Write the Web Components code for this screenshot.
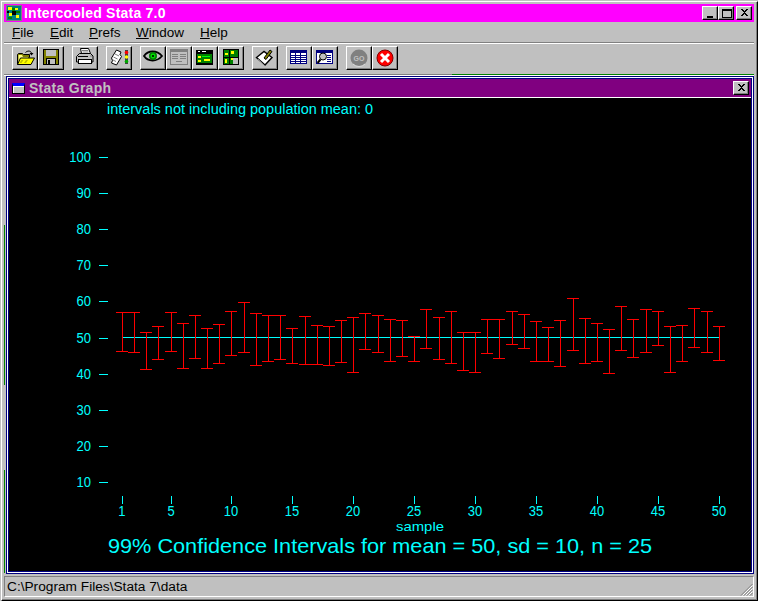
<!DOCTYPE html>
<html>
<head>
<meta charset="utf-8">
<title>Intercooled Stata 7.0</title>
<style>
  html, body { margin: 0; padding: 0; background: #c0c0c0; }
</style>
</head>
<body>
<stata-app>
  <title-bar slot="title">Intercooled Stata 7.0</title-bar>
  <menu-bar slot="menu"></menu-bar>
  <tool-bar slot="tools"></tool-bar>
  <graph-window slot="main" heading="Stata Graph"><stata-plot></stata-plot></graph-window>
  <status-bar slot="status">C:\Program Files\Stata 7\data</status-bar>
</stata-app>

<script>
const FONT = `"Liberation Sans", Arial, sans-serif`;

const CAPTION_BTN = `
  :host { display: block; }
  .cap {
    width: 16px; height: 14px; box-sizing: border-box; background: #c0c0c0;
    border: 1px solid; border-color: #fff #000 #000 #fff;
    box-shadow: inset -1px -1px 0 #808080;
    display: flex; align-items: center; justify-content: center;
  }
  svg { display: block; }
`;

class CaptionButton extends HTMLElement {
  constructor() {
    super();
    this.attachShadow({ mode: 'open' });
    const glyphs = {
      min: '<rect x="2" y="8" width="6" height="2" fill="#000"/>',
      max: '<path d="M1 1h9v8h-9z M1 2h9" fill="none" stroke="#000"/>',
      close: '<path d="M2 1h2v1h1v1h1v-1h1v-1h2v1h-1v1h-1v1h-1v1h1v1h1v1h1v1h-2v-1h-1v-1h-1v1h-1v1h-2v-1h1v-1h1v-1h1v-1h-1v-1h-1v-1h-1z" fill="#000"/>'
    };
    this.shadowRoot.innerHTML = `
      <style>${CAPTION_BTN}</style>
      <div class="cap"><svg width="11" height="10" viewBox="0 0 11 10" shape-rendering="crispEdges">${glyphs[this.getAttribute('kind')]}</svg></div>
    `;
  }
}
customElements.define('caption-button', CaptionButton);

class TitleBar extends HTMLElement {
  constructor() {
    super();
    this.attachShadow({ mode: 'open' });
    this.shadowRoot.innerHTML = `
      <style>
        :host { display: flex; align-items: center; height: 18px; background: #ff00ff; padding: 0 2px; color: #fff; font: bold 14px ${FONT}; }
        .icon { margin-right: 2px; display: block; }
        .text { flex: 1; letter-spacing: .23px; white-space: nowrap; }
        .btns { display: flex; }
        .btns caption-button:last-child { margin-left: 2px; }
      </style>
      <svg class="icon" width="16" height="16" viewBox="0 0 16 16" shape-rendering="crispEdges">
        <rect width="16" height="16" fill="#808080"/>
        <rect x="1" y="1" width="14" height="14" fill="#008080"/>
        <path d="M2 2h4v3h-4z M9 3h3v2h-3z M3 8h3v3h-3z M10 10h3v3h-3z" fill="#ffff00"/>
        <path d="M6 3h3v3h-3z M2 12h4v2h-4z M10 6h4v2h-4z" fill="#008000"/>
        <path d="M6 6h4v4h-4z M1 6h2v2h-2z" fill="#000"/>
      </svg>
      <span class="text"><slot></slot></span>
      <div class="btns">
        <caption-button kind="min"></caption-button>
        <caption-button kind="max"></caption-button>
        <caption-button kind="close"></caption-button>
      </div>
    `;
  }
}
customElements.define('title-bar', TitleBar);

class MenuBar extends HTMLElement {
  constructor() {
    super();
    this.attachShadow({ mode: 'open' });
    const items = [['F', 'ile', 38], ['E', 'dit', 39], ['P', 'refs', 47], ['W', 'indow', 64], ['H', 'elp', 40]];
    this.shadowRoot.innerHTML = `
      <style>
        :host { display: flex; height: 20px; align-items: center; padding-left: 8px; font: 13.5px ${FONT}; color: #000; border-bottom: 1px solid #808080; box-shadow: 0 1px 0 #fff; }
        span { display: block; white-space: nowrap; }
        u { text-underline-offset: 1px; }
      </style>
      ${items.map(i => `<span style="width:${i[2]}px"><u>${i[0]}</u>${i[1]}</span>`).join('')}
    `;
  }
}
customElements.define('menu-bar', MenuBar);

class ToolButton extends HTMLElement {
  constructor() {
    super();
    this.attachShadow({ mode: 'open' });
    this.shadowRoot.innerHTML = `
      <style>
        :host {
          display: flex; align-items: center; justify-content: center;
          width: 26px; height: 24px; box-sizing: border-box; background: #c0c0c0;
          border: 1px solid; border-color: #fff #000 #000 #fff;
          box-shadow: inset -1px -1px 0 #808080;
        }
        ::slotted(svg) { display: block; }
      </style>
      <slot></slot>
    `;
  }
}
customElements.define('tool-button', ToolButton);

// all on a 22x22 grid
const ICONS = [
  // open
  `<path d="M3.500 17.500v-10l1-1h4l1 1h6v3" fill="#808000" stroke="#000"/><path d="M4.500 16v-8h3.500l1 2h5v1h-7z" fill="#ffff80"/><path d="M3.500 17.500l3-6.500h14l-3.500 6.500z" fill="#ffff00" stroke="#000"/><path d="M5.500 16l2-3h2l-2 3zM10 16l2-3h2l-2 3z" fill="#c0c000"/><path d="M11.500 5.500c2-2 5-2 6 .5" fill="none" stroke="#000"/><path d="M15.500 6h4l-2 2.500z" fill="#000"/>`,
  // save
  `<rect x="3.500" y="2.500" width="15" height="15" fill="#808000" stroke="#000"/><rect x="6" y="3" width="10" height="6" fill="#c0c0c0"/><rect x="6.500" y="11.500" width="9" height="6" fill="#c0c0c0" stroke="#000"/><rect x="8" y="13" width="2" height="4" fill="#000"/>`,
  // print
  `<path d="M6.500 1.500h8l2 5h-9z" fill="#fff" stroke="#000"/><path d="M8 3.500h6M8.500 5h6" stroke="#808080"/><path d="M2.500 9.500l3-3h11l2.500 2.500v6h-16.500z" fill="#c0c0c0" stroke="#000"/><rect x="4.500" y="12.500" width="13" height="4" fill="#fff" stroke="#000"/><path d="M4 9.500h10" stroke="#000"/><path d="M16 9h2" stroke="#808080"/>`,
  // log and lights
  `<path d="M3.500 11l5-8 4.500 2-1 2.500 1.500 2-5 8.500-5-2 1-2.500z" fill="#fff" stroke="#000"/><path d="M7 7l4 2M5.500 10l4 2M5 13l3 1.500" stroke="#808080"/><rect x="16" y="3" width="5" height="16" fill="#c0c0c0"/><rect x="17" y="3" width="3" height="14" fill="#404040"/><circle cx="18.500" cy="5.500" r="1.800" fill="#f00"/><circle cx="18.500" cy="10" r="1.800" fill="#ff0"/><circle cx="18.500" cy="14.500" r="1.800" fill="#0a0"/>`,
  // eye
  `<path d="M2 9c4-6 13-6 18 0-5 6-14 6-18 0z" fill="#c0c0c0" stroke="#000" stroke-width="1.800"/><circle cx="11" cy="9" r="4" fill="#008000"/><circle cx="11" cy="9" r="2.400" fill="#00e000"/><circle cx="11" cy="9" r="1.100" fill="#000"/>`,
  // results, greyed
  `<rect x="2" y="2" width="18" height="16" fill="#808080"/><rect x="3" y="5" width="16" height="12" fill="#c0c0c0"/><path d="M4 7.500h6M12 7.500h6M4 9.500h6M12 9.500h6M4 11.500h6M12 11.500h6M8 14.500h6" stroke="#808080"/>`,
  // board, black frame
  `<rect x="2" y="3" width="17" height="15" fill="#000"/><rect x="3" y="7" width="15" height="9" fill="#008000"/><path d="M4 4.500h2M8 4.500h4" stroke="#fff"/><path d="M4 9h3v2h-3z M10 12h6v2h-6z M4 13h3v2h-3z" fill="#ffff00"/><path d="M8 9h8v1h-8z" fill="#00ff00"/>`,
  // board, grid
  `<rect x="3" y="2" width="16" height="16" fill="#000"/><rect x="4" y="3" width="14" height="14" fill="#008000"/><rect x="13" y="11" width="5" height="6" fill="#c0c0c0"/><path d="M9.500 3v14M4 10.500h14" stroke="#000"/><path d="M5 6h3v2h-3z M11 4h3v3h-3z M5 12h2v4h-2z M11 11h2v2h-2z" fill="#ffff00"/>`,
  // tag and pen
  `<path d="M2.500 10.500l7.500-6 8 6-7 7.500z" fill="#fff" stroke="#000" stroke-width="1.400"/><path d="M10 11l6-8 2 1.500-6 8z" fill="#808000" stroke="#000"/><path d="M4 12l7 7" stroke="#808080"/>`,
  // table
  `<rect x="2" y="3" width="17" height="14" fill="#000080"/><rect x="3" y="6" width="15" height="10" fill="#fff"/><path d="M3 8.500h15M3 10.500h15M3 12.500h15M3 14.500h15M7.500 6v10M12.500 6v10" stroke="#000080"/>`,
  // table and magnifier
  `<rect x="2" y="3" width="17" height="14" fill="#000080"/><rect x="3" y="6" width="15" height="10" fill="#fff"/><path d="M13 8.500h4M13 10.500h4M13 12.500h4M13 14.500h4" stroke="#000080"/><circle cx="9" cy="9.500" r="3.500" fill="#c0c0c0" stroke="#000"/><path d="M6.500 12.500l-3 3.500" stroke="#000" stroke-width="2"/>`,
  // go, greyed
  `<circle cx="11" cy="11" r="8.500" fill="#808080"/><path d="M5 17a8.500 8.500 0 0 0 12 0" stroke="#dfdfdf" fill="none"/><text x="11" y="13.500" text-anchor="middle" font-family="Liberation Sans" font-size="7" font-weight="bold" fill="#c0c0c0">GO</text>`,
  // stop
  `<circle cx="11" cy="11" r="8" fill="#f00" stroke="#800000"/><path d="M7 7l8 8M15 7l-8 8" stroke="#fff" stroke-width="3"/>`
];

class ToolBar extends HTMLElement {
  constructor() {
    super();
    this.attachShadow({ mode: 'open' });
    const groups = [[0, 1], [2], [3], [4, 5, 6, 7], [8], [9, 10], [11, 12]];
    const btn = i => `<tool-button><svg width="22" height="22" viewBox="0 0 22 22">${ICONS[i]}</svg></tool-button>`;
    this.shadowRoot.innerHTML = `
      <style>
        :host { display: flex; gap: 8px; height: 30px; padding: 2px 0 0 8px; box-sizing: border-box; margin-top: 1px; }
        .group { display: flex; }
      </style>
      ${groups.map(g => `<div class="group">${g.map(btn).join('')}</div>`).join('')}
    `;
  }
}
customElements.define('tool-bar', ToolBar);

class GraphWindow extends HTMLElement {
  constructor() {
    super();
    this.attachShadow({ mode: 'open' });
    this.shadowRoot.innerHTML = `
      <style>
        :host {
          display: flex; flex-direction: column; box-sizing: border-box;
          width: 748px; height: 498px; background: #fff;
          border: 1px solid #000080; padding: 1px;
        }
        .inner { flex: 1; display: flex; flex-direction: column; border: 1px solid #000080; min-height: 0; }
        .head {
          height: 18px; background: #800080; display: flex; align-items: center;
          padding: 0 2px 0 3px; color: #c0c0c0; font: bold 14px ${FONT};
          border-bottom: 1px solid #fff; flex: none;
        }
        .sys { width: 13px; height: 11px; margin-right: 4px; box-sizing: border-box; background: #c0c0c0; border: 1px solid #000; border-top: 3px solid #0000ff; box-shadow: inset 1px 1px 0 #fff; }
        .text { flex: 1; letter-spacing: .27px; }
        .body { flex: 1; background: #000; min-height: 0; overflow: hidden; }
        ::slotted(*) { display: block; }
      </style>
      <div class="inner">
        <div class="head">
          <div class="sys"></div>
          <span class="text">${this.getAttribute('heading')}</span>
          <caption-button kind="close"></caption-button>
        </div>
        <div class="body"><slot></slot></div>
      </div>
    `;
  }
}
customElements.define('graph-window', GraphWindow);

// x, top, bottom of each interval, read off in page pixels
const BARS = [
  [122,312,351],[134,312,352],[146,332,369],[158,326,359],[171,312,351],
  [183,323,368],[195,315,358],[207,328,368],[219,324,363],[231,311,355],
  [244,302,352],[256,313,365],[268,315,361],[280,315,359],[292,328,363],
  [305,316,364],[317,325,364],[329,326,365],[341,320,362],[353,317,372],
  [365,313,349],[378,315,352],[390,319,361],[402,320,356],[414,336,361],
  [426,309,348],[439,317,359],[451,311,363],[463,332,370],[475,332,372],
  [487,319,353],[499,319,358],[512,311,344],[524,314,348],[536,321,361],
  [548,327,361],[560,320,366],[573,298,350],[585,318,363],[597,323,361],
  [609,329,373],[621,306,350],[633,319,357],[646,309,352],[658,311,345],
  [670,326,372],[682,325,361],[694,308,347],[707,311,352],[719,326,360]
];

class StataPlot extends HTMLElement {
  constructor() {
    super();
    this.attachShadow({ mode: 'open' });
    const hline = (x1, x2, y, c) => `<rect x="${x1}" y="${y}" width="${x2 - x1}" height="1" fill="${c}"/>`;
    const vline = (x, y1, y2, c) => `<rect x="${x}" y="${y1}" width="1" height="${y2 - y1}" fill="${c}"/>`;
    const CY = '#00ffff', RD = '#ff0000';
    let marks = '';
    for (let v = 10; v <= 100; v += 10) {
      const y = Math.round(482 - (v - 10) * 36.11 / 10);
      marks += hline(99, 108, y, CY);
      marks += `<text class="tick" x="91" y="${y + 5}" text-anchor="end" transform-origin="91 ${y + 5}">${v}</text>`;
    }
    [1, 5, 10, 15, 20, 25, 30, 35, 40, 45, 50].forEach(n => {
      const x = BARS[n - 1][0];
      marks += vline(x, 496, 504, CY);
      marks += `<text class="tick" x="${x}" y="516" text-anchor="middle" transform-origin="${x} 516">${n}</text>`;
    });
    marks += hline(123, 720, 337, CY);
    BARS.forEach(b => {
      marks += vline(b[0], b[1], b[2], RD);
      marks += hline(b[0] - 6, b[0] + 6, b[1], RD);
      marks += hline(b[0] - 6, b[0] + 6, b[2], RD);
    });
    this.shadowRoot.innerHTML = `
      <style>
        :host { display: block; width: 742px; height: 473px; }
        svg { display: block; }
        rect { shape-rendering: crispEdges; }
        text { font-family: ${FONT}; fill: #00ffff; }
        .tick { font-size: 13px; transform: scaleY(1.12); }
      </style>
      <svg width="742" height="473" viewBox="9 98 742 473">
        <text x="107" y="114" font-size="14" textLength="266" lengthAdjust="spacingAndGlyphs">intervals not including population mean: 0</text>
        ${marks}
        <text x="396" y="531" font-size="13" textLength="48" lengthAdjust="spacingAndGlyphs">sample</text>
        <text x="108" y="553" font-size="21" textLength="544" lengthAdjust="spacingAndGlyphs">99% Confidence Intervals for mean = 50, sd = 10, n = 25</text>
      </svg>
    `;
  }
}
customElements.define('stata-plot', StataPlot);

class StatusBar extends HTMLElement {
  constructor() {
    super();
    this.attachShadow({ mode: 'open' });
    this.shadowRoot.innerHTML = `
      <style>
        :host {
          display: flex; align-items: center; justify-content: space-between;
          height: 21px; box-sizing: border-box; padding: 0 0 0 2px;
          border: 1px solid; border-color: #808080 #fff #fff #808080;
          font: 13.7px ${FONT}; color: #000; white-space: nowrap;
        }
        svg { display: block; align-self: flex-end; }
      </style>
      <span><slot></slot></span>
      <svg width="13" height="13" viewBox="0 0 13 13">
        <path d="M12.500 1l-11.500 11.500M12.500 4l-8.500 8.500M12.500 7l-5.500 5.500M12.500 10l-2.500 2.500" stroke="#808080" fill="none"/>
        <path d="M12.500 2.500l-10 10M12.500 5.500l-7 7M12.500 8.500l-4 4" stroke="#fff" fill="none"/>
      </svg>
    `;
  }
}
customElements.define('status-bar', StatusBar);

class StataApp extends HTMLElement {
  constructor() {
    super();
    this.attachShadow({ mode: 'open' });
    this.shadowRoot.innerHTML = `
      <style>
        :host {
          display: block; position: relative; width: 758px; height: 601px; box-sizing: border-box;
          background: #c0c0c0; padding: 1px 0 0 0;
        }
        .frame {
          height: 600px; box-sizing: border-box; padding: 2px 3px 2px 2px; margin-left: 1px;
          border: 1px solid; border-color: #fff #000 #000 #fff;
          box-shadow: inset -1px -1px 0 #808080;
          display: flex; flex-direction: column;
        }
        .mdi {
          height: 502px; box-sizing: border-box; padding: 2px 0 0 2px;
          background: linear-gradient(to right, #808080 448px, #008000 448px) top / 100% 1px no-repeat;
          position: relative;
        }
        .mdi::before { content: ''; position: absolute; left: 0; right: 0; top: 1px; height: 1px; background: #fff; }
        .speck { position: absolute; left: 4px; width: 1px; background: #008000; }
      </style>
      <div class="frame">
        <slot name="title"></slot>
        <slot name="menu"></slot>
        <slot name="tools"></slot>
        <div class="mdi"><slot name="main"></slot></div>
        <slot name="status"></slot>
      </div>
      <div class="speck" style="top:225px;height:160px"></div>
      <div class="speck" style="top:470px;height:103px"></div>
    `;
  }
}
customElements.define('stata-app', StataApp);
</script>
</body>
</html>
